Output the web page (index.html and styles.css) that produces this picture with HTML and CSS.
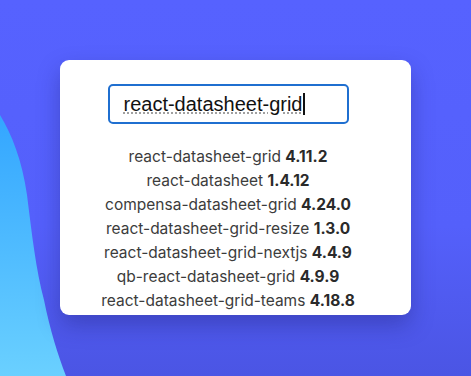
FILE: index.html
```html
<!DOCTYPE html>
<html>
<head>
<meta charset="utf-8">
<link rel="stylesheet" href="styles.css">
</head>
<body>
<svg class="blob" width="471" height="376" viewBox="0 0 471 376">
  <defs>
    <linearGradient id="bg" x1="0" y1="0" x2="0" y2="1">
      <stop offset="0" stop-color="#33a6ff"/>
      <stop offset="1" stop-color="#6ad0ff"/>
    </linearGradient>
  </defs>
  <path d="M0 115 C 12 135, 22 160, 27 195 C 32 235, 36 270, 44 300 C 50 330, 58 355, 66 376 L 0 376 Z" fill="url(#bg)"/>
</svg>
<div class="card">
  <div class="search"><span class="query">react-datasheet-grid</span><span class="caret"></span></div>
  <ul class="results">
    <li>react-datasheet-grid <b>4.11.2</b></li>
    <li>react-datasheet <b>1.4.12</b></li>
    <li>compensa-datasheet-grid <b>4.24.0</b></li>
    <li>react-datasheet-grid-resize <b>1.3.0</b></li>
    <li>react-datasheet-grid-nextjs <b>4.4.9</b></li>
    <li>qb-react-datasheet-grid <b>4.9.9</b></li>
    <li>react-datasheet-grid-teams <b>4.18.8</b></li>
  </ul>
</div>
</body>
</html>
```
FILE: styles.css
```css
html, body {
  margin: 0;
  padding: 0;
}
body {
  width: 471px;
  height: 376px;
  overflow: hidden;
  background: linear-gradient(180deg, #5662ff 0%, #5460fb 60%, #4b55e4 100%);
  position: relative;
  padding-top: 60px;
  box-sizing: border-box;
  font-family: "Inter", "Noto Sans", sans-serif;
}
.blob {
  position: absolute;
  left: 0;
  top: 0;
}
.card {
  position: relative;
  margin-left: 60px;
  width: 351px;
  height: 255px;
  box-sizing: border-box;
  background: #fff;
  border-radius: 9px;
  padding: 24px 15px 0 0;
  box-shadow: 0 10px 22px rgba(30, 30, 110, 0.35);
  display: flex;
  flex-direction: column;
  align-items: center;
}
.search {
  width: 241px;
  height: 40px;
  box-sizing: border-box;
  border: 2px solid #1f6fd0;
  border-radius: 5px;
  padding-left: 14px;
  display: flex;
  align-items: center;
  font-family: "Liberation Sans", Arial, sans-serif;
  font-size: 20px;
  color: #111;
}
.query {
  text-decoration: underline dotted #a0a0a0;
  text-underline-offset: 2px;
}
.caret {
  display: inline-block;
  width: 1.5px;
  height: 22px;
  background: #111;
  margin-left: 1px;
}
.results {
  list-style: none;
  margin: 21px 0 0;
  padding: 0;
  text-align: center;
  font-size: 15.5px;
  line-height: 24px;
  color: #3c3c3c;
  white-space: nowrap;
}
.results b {
  color: #2a2a2a;
  font-weight: 700;
}
```
